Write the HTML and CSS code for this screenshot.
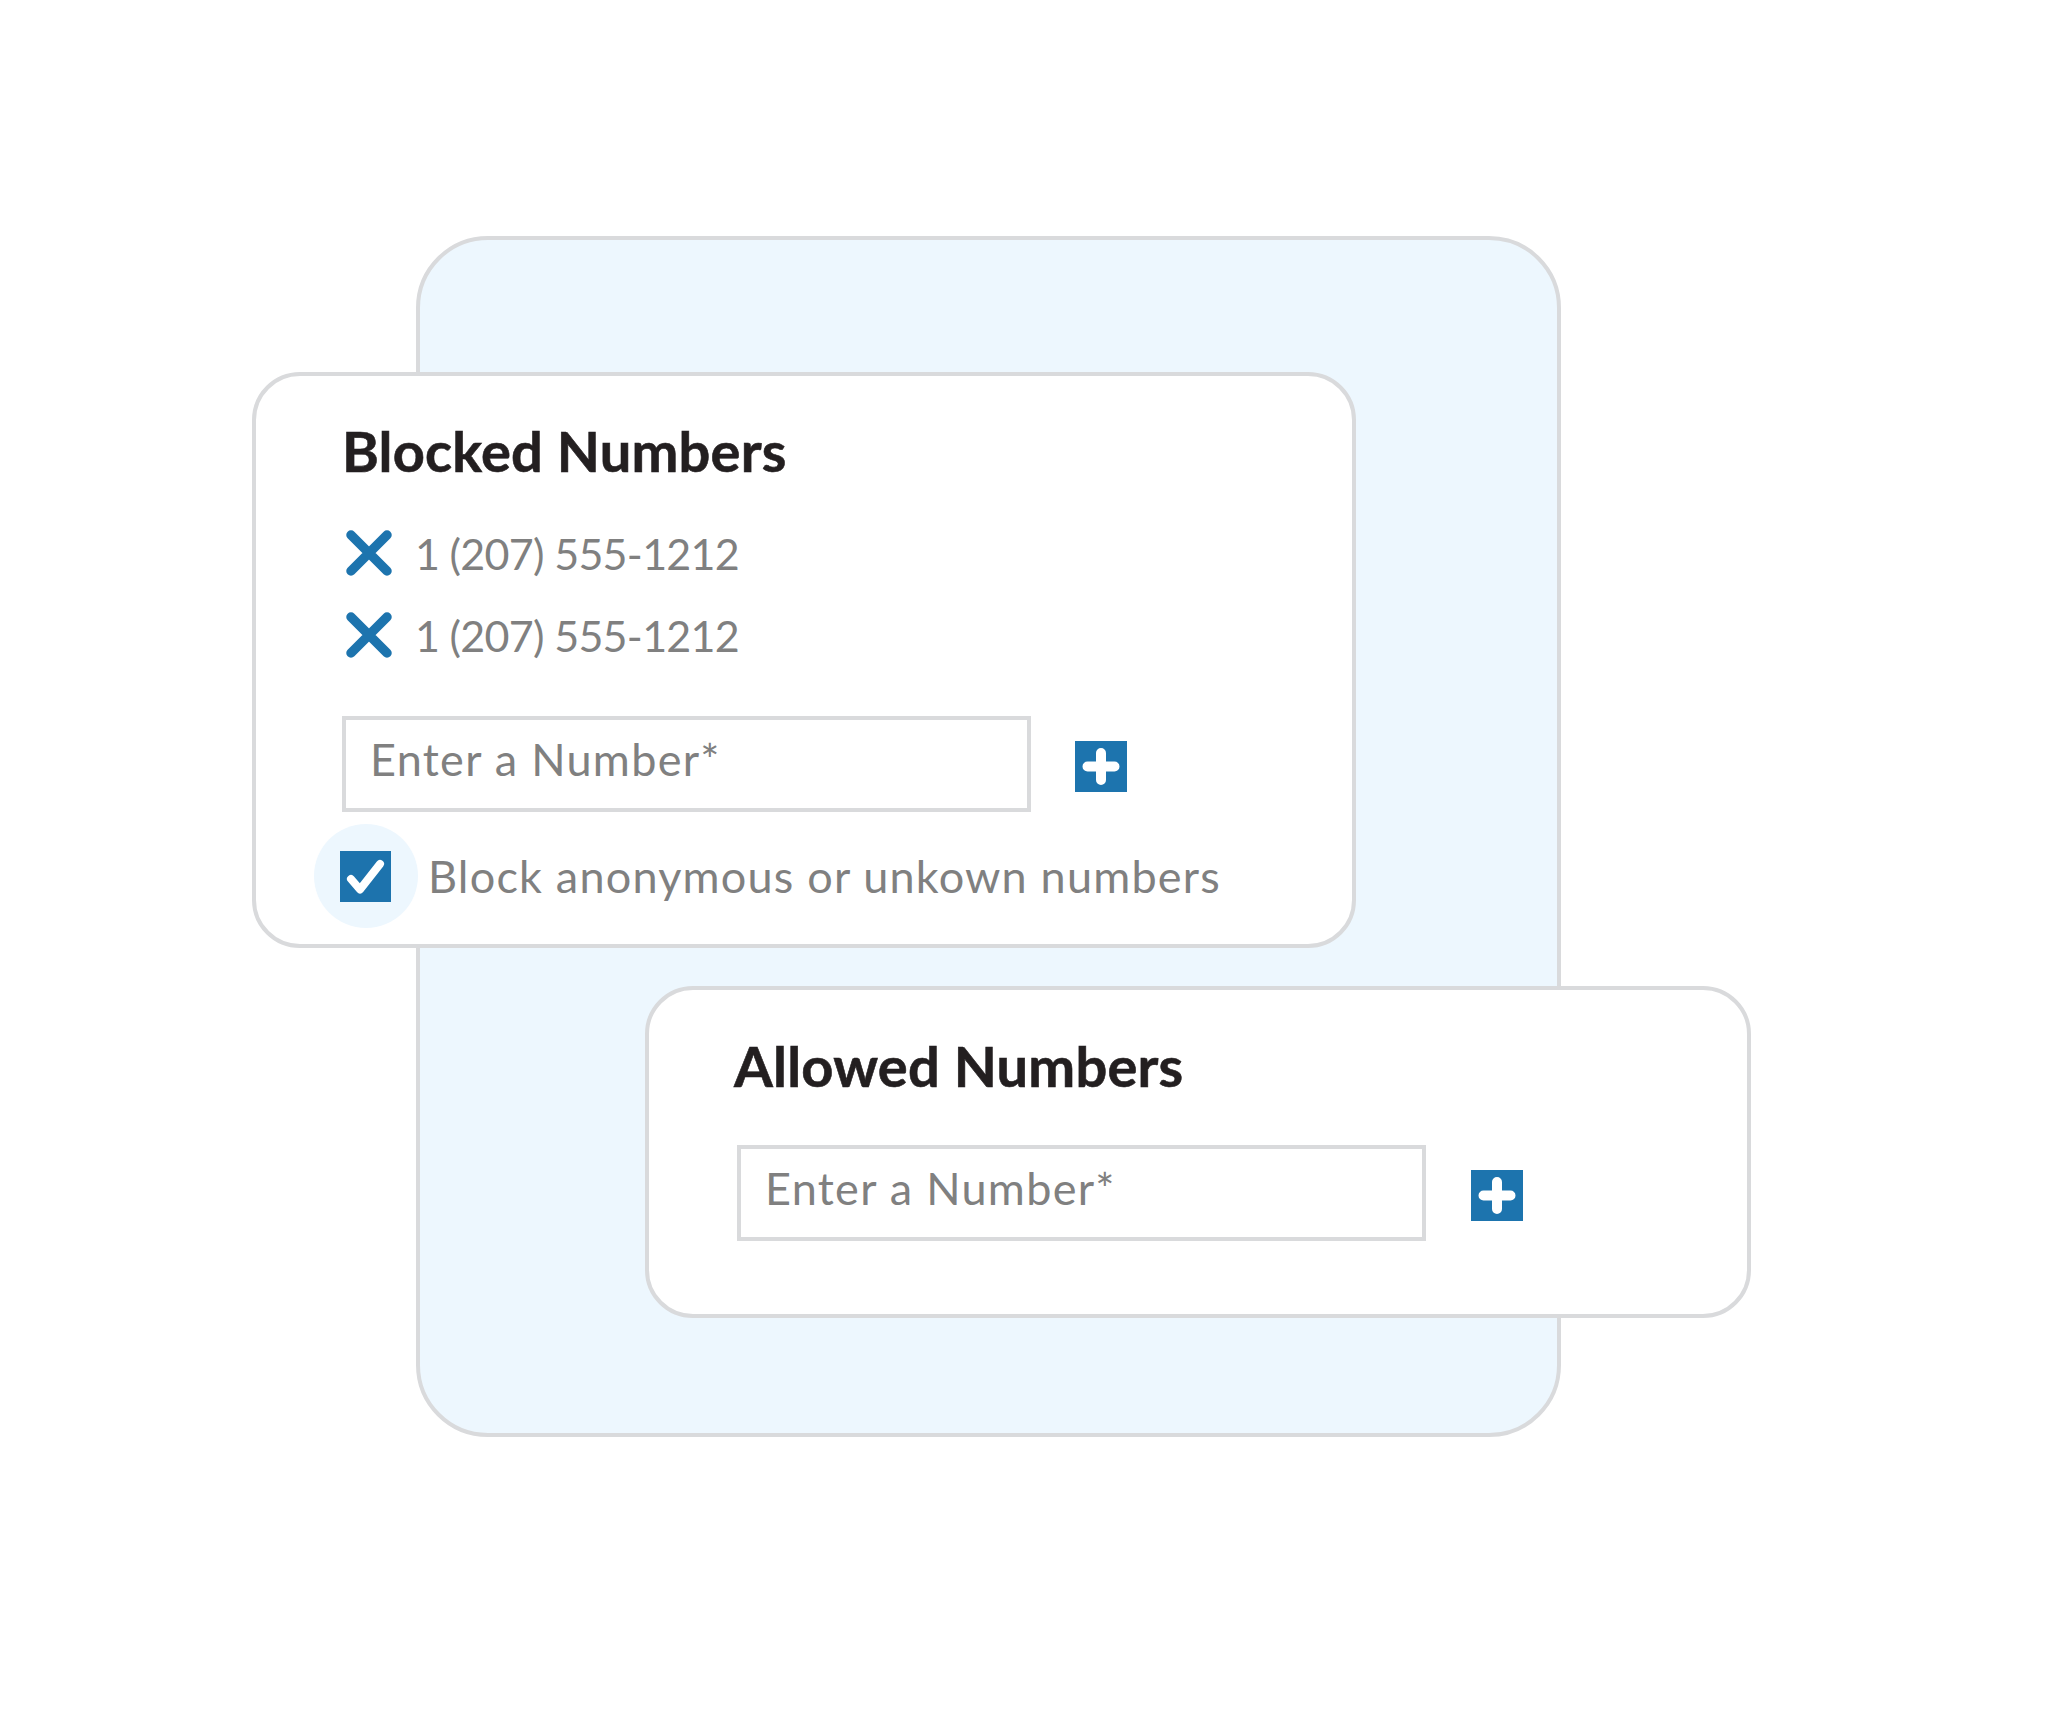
FILE: index.html
```html
<!DOCTYPE html>
<html lang="en">
<head>
<meta charset="utf-8">
<title>Call blocking</title>
<link rel="stylesheet" href="styles.css">
</head>
<body>
<div class="stage">
  <div class="backdrop"></div>

  <section class="card card-blocked">
    <h2 class="card-title">Blocked Numbers</h2>
    <ul class="number-list">
      <li class="number-row">
        <svg class="x-icon" viewBox="0 0 46 46" aria-hidden="true"><path d="M5 5 L41 41 M41 5 L5 41"/></svg>
        <span class="number">1 (207) 555-1212</span>
      </li>
      <li class="number-row">
        <svg class="x-icon" viewBox="0 0 46 46" aria-hidden="true"><path d="M5 5 L41 41 M41 5 L5 41"/></svg>
        <span class="number">1 (207) 555-1212</span>
      </li>
    </ul>
    <div class="entry-row">
      <div class="field">Enter a Number*</div>
      <span class="add-btn"><svg viewBox="0 0 51 51" aria-hidden="true"><path d="M12 25.5 H39 M25.5 12 V39"/></svg></span>
    </div>
    <div class="check-row">
      <span class="checkbox"><svg viewBox="0 0 51 51" aria-hidden="true"><path d="M11 28 L20 38.5 L40 13"/></svg></span>
      <span class="check-label">Block anonymous or unkown numbers</span>
    </div>
  </section>

  <section class="card card-allowed">
    <h2 class="card-title card-title-allowed">Allowed Numbers</h2>
    <div class="entry-row entry-row-allowed">
      <div class="field">Enter a Number*</div>
      <span class="add-btn"><svg viewBox="0 0 51 51" aria-hidden="true"><path d="M12 25.5 H39 M25.5 12 V39"/></svg></span>
    </div>
  </section>
</div>
</body>
</html>
```

FILE: styles.css
```css
* { box-sizing: border-box; }

html, body {
  margin: 0;
  padding: 0;
  background: #ffffff;
}

body {
  font-family: "Lato", "Open Sans", "DejaVu Sans", sans-serif;
  color: #808080;
}

.stage {
  position: relative;
  width: 2048px;
  height: 1726px;
}

.backdrop {
  position: absolute;
  left: 416px;
  top: 236px;
  width: 1145px;
  height: 1201px;
  background: #edf7fe;
  border: 4px solid #d9dadc;
  border-radius: 72px;
}

.card {
  position: absolute;
  background: #ffffff;
  border: 4px solid #d9dadc;
  border-radius: 48px;
  display: flex;
  flex-direction: column;
}

.card-blocked {
  left: 252px;
  top: 372px;
  width: 1104px;
  height: 576px;
  padding: 47px 0 0 86px;
}

.card-allowed {
  left: 645px;
  top: 986px;
  width: 1106px;
  height: 332px;
  padding: 48px 0 0 88px;
}

.card-title {
  margin: 0;
  font-size: 56px;
  line-height: 56px;
  font-weight: 700;
  color: #231f20;
  letter-spacing: 0.2px;
  -webkit-text-stroke: 0.6px #231f20;
}

.card-title-allowed {
  margin-left: -3px;
}

.number-list {
  list-style: none;
  margin: 45px 0 0 0;
  padding: 0;
  display: flex;
  flex-direction: column;
  gap: 22px;
}

.number-row {
  height: 60px;
  display: flex;
  align-items: center;
  gap: 23px;
}

.x-icon {
  width: 46px;
  height: 46px;
  flex: none;
  margin-left: 4px;
  margin-top: -2px;
}

.x-icon path {
  fill: none;
  stroke: #1d74ae;
  stroke-width: 9.5;
  stroke-linecap: round;
}

.number {
  font-size: 43px;
  line-height: 60px;
  letter-spacing: -0.7px;
  color: #808080;
}

.entry-row {
  margin-top: 50px;
  display: flex;
  align-items: center;
  gap: 44px;
}

.entry-row-allowed {
  margin-top: 51px;
  gap: 45px;
}

.field {
  width: 689px;
  height: 96px;
  border: 4px solid #d9dadc;
  padding: 12px 24px 0 24px;
  font-size: 45px;
  line-height: 54px;
  letter-spacing: 1.3px;
  color: #808080;
  background: #ffffff;
}

.add-btn {
  width: 52px;
  height: 51px;
  background: #1d74ae;
  display: block;
  margin-top: 5px;
}

.add-btn svg {
  display: block;
  width: 52px;
  height: 51px;
}

.add-btn path {
  fill: none;
  stroke: #ffffff;
  stroke-width: 10;
  stroke-linecap: round;
}

.check-row {
  margin-top: 39px;
  display: flex;
  align-items: center;
  gap: 37px;
  margin-left: -2px;
}

.checkbox {
  position: relative;
  width: 51px;
  height: 51px;
  flex: none;
}

.checkbox::before {
  content: "";
  position: absolute;
  left: -26px;
  top: -27px;
  width: 104px;
  height: 104px;
  border-radius: 50%;
  background: #edf7fe;
}

.checkbox svg {
  position: relative;
  display: block;
  width: 51px;
  height: 51px;
  background: #1d73ad;
}

.checkbox path {
  fill: none;
  stroke: #ffffff;
  stroke-width: 8;
  stroke-linecap: round;
  stroke-linejoin: round;
}

.check-label {
  font-size: 45px;
  line-height: 51px;
  letter-spacing: 1.2px;
  color: #808080;
}
```
